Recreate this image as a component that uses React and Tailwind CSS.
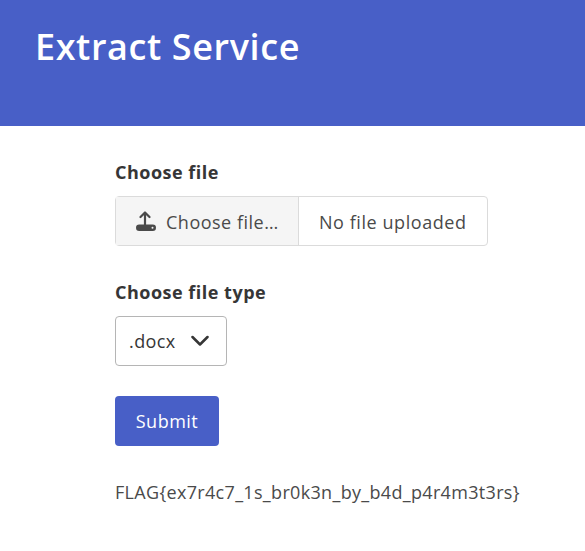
export default function App() {
  return (
    <div className="min-h-screen bg-white font-['Open_Sans',sans-serif] text-[18px] tracking-[0.5px] text-[#4a4a4a]">
      <header className="h-[126px] bg-[#485fc7] pl-[35px] pt-6">
        <h1 className="text-[36px] font-semibold leading-[45px] tracking-[0.6px] text-white">Extract Service</h1>
      </header>

      <main className="pl-[115px] pt-[33px]">
        <form>
          <label className="block font-bold leading-[27px] text-[#363636]">Choose file</label>
          <div className="mt-[10px] flex h-[50px] w-[373px] rounded border border-[#dbdbdb]">
            <div className="flex w-[183px] items-center gap-[10px] border-r border-[#dbdbdb] bg-[#f5f5f5] pl-5">
              <svg width="20" height="20" viewBox="0 0 20 20">
                <path d="M9 14V1.500M4.500 6 9 1.500 13.500 6" fill="none" stroke="#4a4a4a" strokeWidth="2.200" strokeLinecap="round" strokeLinejoin="round" />
                <rect x="0" y="13.500" width="20" height="6.500" rx="3.250" fill="#4a4a4a" />
                <circle cx="16.500" cy="16.700" r="1" fill="#f5f5f5" />
              </svg>
              <span className="pt-[2px]">Choose file…</span>
            </div>
            <div className="flex flex-1 items-center pl-5 pt-[2px] tracking-[0.56px]">No file uploaded</div>
          </div>

          <label className="mt-[33px] block font-bold leading-[27px] text-[#363636]">Choose file type</label>
          <div className="mt-[10px] flex h-[50px] w-[112px] items-center justify-between rounded border border-[#b5b5b5] pl-[13px] pr-[17px] text-[#363636]">
            <span className="tracking-[0.4px]">.docx</span>
            <svg width="18" height="12" viewBox="0 0 18 12" fill="none" stroke="#363636" strokeWidth="2.500" strokeLinecap="round" strokeLinejoin="round">
              <path d="M1.500 2 9 9.500 16.500 2" />
            </svg>
          </div>

          <button type="button" className="mt-[30px] flex h-[50px] w-[104px] items-center justify-center rounded bg-[#485fc7] text-white">
            Submit
          </button>
        </form>
        <p className="mt-[33px] leading-[27px] tracking-[0.32px]">FLAG{"{"}ex7r4c7_1s_br0k3n_by_b4d_p4r4m3t3rs{"}"}</p>
      </main>
    </div>
  );
}
